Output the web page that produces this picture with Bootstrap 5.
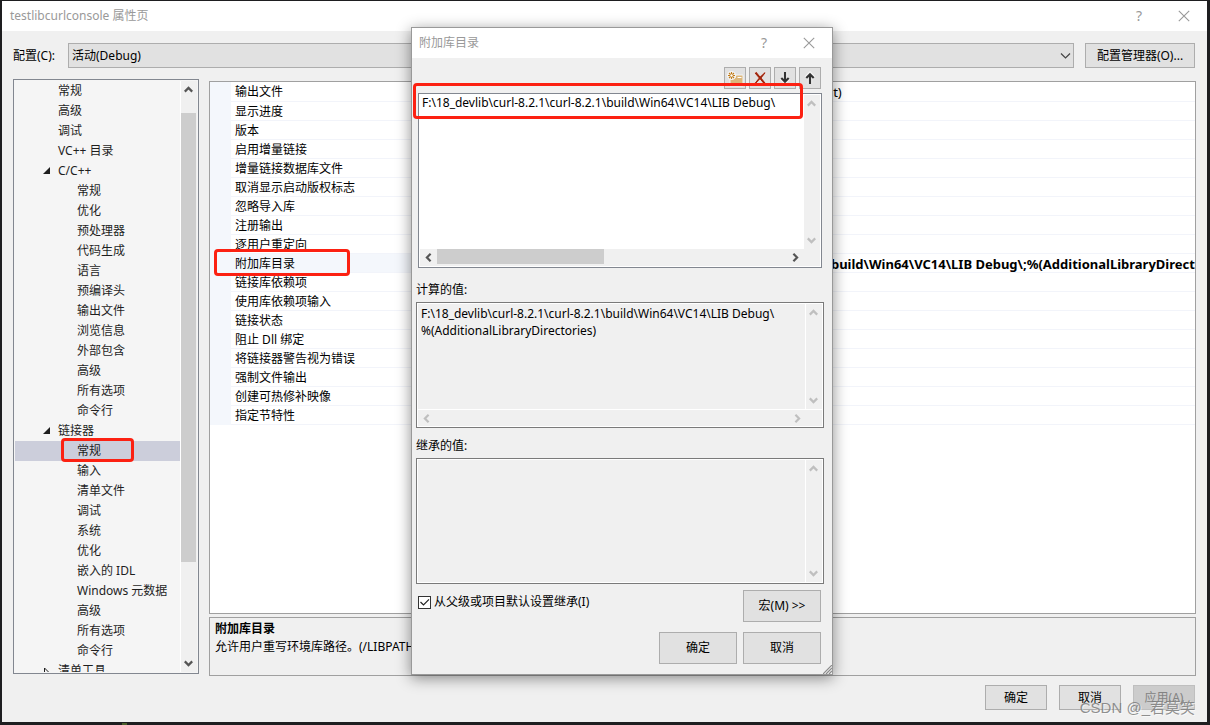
<!DOCTYPE html>
<html lang="zh-CN">
<head>
<meta charset="utf-8">
<meta name="viewport" content="width=device-width, initial-scale=1">
<title>testlibcurlconsole 属性页</title>
<link href="https://cdn.jsdelivr.net/npm/bootstrap@5.3.0/dist/css/bootstrap.min.css" rel="stylesheet">
<style>
  :root { --face: #f0f0f0; --btn: #e1e1e1; --edge: #adadad; --frame: #828790; --hot: #fc2112; }
  body { font: 12px/20px "Noto Sans", "Noto Sans CJK SC", sans-serif; color: #000; background: #1e1e20; }
  .desktop { min-height: 100vh; padding: 1px 3px 3px 2px; }
  .desktop::after { content: ""; position: absolute; left: 122px; bottom: 0; width: 5px; height: 2px; background: #4b5f2c; }
  .app-window { background: var(--face); }
  .titlebar { height: 30px; background: #fff; color: #999; padding: 0 17px 0 8px; gap: 33px; }
  .caption-btn { border: 0; background: none; padding: 0; width: 12px; height: 20px; color: #999; font-size: 14px; line-height: 20px; }
  .caption-btn svg, .tool-btn svg, .bar-btn svg { display: block; margin: auto; }
  .config-row { padding: 12px 12px 0 11px; gap: 8px; }
  .config-row label { width: 47px; }
  .win-select { height: 25px; border: 1px solid var(--edge); border-radius: 0; background: var(--btn); padding: 0 3px; font-size: 12px; color: #000; appearance: none; width: 100%; }
  .select-wrap svg { position: absolute; right: 3px; top: 9px; pointer-events: none; }
  .win-btn { border: 1px solid var(--edge); border-radius: 0; background: var(--btn); color: #000; padding: 0; font-size: 12px; line-height: 20px; height: 25px; width: 62px; }
  .win-btn.wide { width: 110px; margin-left: 3px; }
  .win-btn.tall { width: 78px; height: 32px; }
  .win-btn:disabled { background: #ccc; border-color: #bfbfbf; color: #838383; opacity: 1; }
  .work-row { padding: 13px 11px 0; gap: 10px; }
  .footer-row { padding: 9px 12px 0 0; gap: 12px; }

  .tree-pane { width: 186px; border: 1px solid var(--frame); background: #f5f5f5; padding: 1px; height: 595px; margin-top: -2px; }
  .tree-list { overflow: hidden; color: #1e1e1e; }
  .tree-list li { height: 20px; padding-left: 43px; white-space: nowrap; }
  .tree-list li.sub { padding-left: 62px; }
  .tree-list li.picked { background: #cccedb; }
  .tree-list svg { position: absolute; left: 28px; top: 6px; }
  .tree-list a { color: inherit; text-decoration: none; }
  .v-bar { width: 17px; background: var(--face); border-left: 1px solid #fff; }
  .v-bar .thumb { width: 15px; background: #cdcdcd; }
  .v-bar .track { padding-top: 15px; }
  .bar-btn { border: 0; background: none; padding: 0; width: 15px; height: 17px; flex: none; }
  .h-bar .bar-btn { width: 17px; }

  .work-main { min-width: 0; }
  .prop-pane { border: 1px solid #a0a0a0; background: #fff; height: 533px; overflow: hidden; }
  .prop-grid { table-layout: fixed; width: 100%; line-height: 16px; }
  .prop-grid th, .prop-grid td { height: 19px; padding: 2px 0 0; border-bottom: 1px solid #f2f4fa; white-space: nowrap; overflow: hidden; text-align: left; vertical-align: top; font-weight: 400; }
  .prop-grid .gutter { width: 21px; background: #f4f7fc; border-color: #f4f7fc; }
  .prop-grid .prop-name { width: 391px; padding-left: 4px; }
  .prop-grid .prop-value { font-size: 13px; }
  .prop-grid .current th, .prop-grid .current td { background: #f4f7fc; }
  .prop-grid .current .prop-value { font-weight: 700; background: #fff; }
  .help-pane { border: 1px solid #a0a0a0; height: 59px; margin-top: 3px; padding: 2px 5px; line-height: 18px; overflow: hidden; }

  .hot { position: absolute; border: 3px solid var(--hot); border-radius: 4px; pointer-events: none; z-index: 3; }
  .hot-tree { left: 46px; top: -3px; width: 73px; height: 24px; }
  .hot-prop { left: 5px; top: 168px; width: 136px; height: 27px; }
  .hot-path { left: -6px; top: -11px; width: 390px; height: 36px; }

  .dir-dialog { position: absolute; left: 411px; top: 27px; width: 422px; background: var(--face); border: 1px solid #999; box-shadow: 0 3px 14px rgba(0,0,0,.45); z-index: 2; }
  .dir-dialog .titlebar { padding-left: 7px; }
  .tool-row { padding: 9px 11px 0 0; gap: 3px; }
  .tool-btn { width: 22px; height: 22px; padding: 0; border: 1px solid var(--edge); background: var(--btn); }
  .path-list { height: 175px; border: 1px solid var(--frame); background: #fff; padding: 1px; margin: 4px 10px 0 6px; }
  .path-input { border: 0; padding: 0 2px; height: 16px; width: 100%; font-size: 12px; line-height: 16px; background: transparent; display: block; }
  .h-bar { height: 17px; background: var(--face); }
  .h-bar .thumb { width: 167px; height: 15px; background: #cdcdcd; }
  .value-group { padding: 0 8px 0 4px; }
  .value-box { height: 126px; border: 1px solid #7a7a7a; padding: 1px; outline: 1px solid #fff; outline-offset: -2px; }
  .value-box textarea { border: 0; background: transparent; resize: none; padding: 1px 3px; line-height: 17px; font-size: 12px; white-space: pre; overflow: hidden; color: #000; }
  .value-box .h-bar { border-top: 1px solid #fff; }
  .field-label { height: 24px; margin-top: 10px; padding-top: 2px; display: block; }
  .value-box + .field-label { margin-top: 6px; }
  .inherit-row { padding: 6px 11px 0 6px; }
  .inherit-check { height: 24px; gap: 3px; }
  .dialog-actions { padding: 10px 11px 10px 0; gap: 6px; }
  .tick { appearance: none; width: 13px; height: 13px; margin: 0; border: 1px solid #333; background: #fff; }
  .tick-wrap svg { position: absolute; left: 1px; top: 1px; pointer-events: none; }
  .grip { position: absolute; right: 0; bottom: 0; }
  .watermark { position: absolute; right: 15px; bottom: 7px; font: 15px/20px "Liberation Sans", "Noto Sans CJK SC", sans-serif; color: rgba(125,125,125,.85); text-shadow: 1px 1px 0 rgba(255,255,255,.6); pointer-events: none; }
</style>
</head>
<body>
<svg width="0" height="0" class="position-absolute" aria-hidden="true">
  <symbol id="up" viewBox="0 0 9 7"><path d="M.8 5.6 4.5 1.9l3.7 3.7" fill="none" stroke="currentColor" stroke-width="2.2"/></symbol>
  <symbol id="down" viewBox="0 0 9 7"><path d="M.8 1.4l3.7 3.7 3.7-3.7" fill="none" stroke="currentColor" stroke-width="2.2"/></symbol>
  <symbol id="left" viewBox="0 0 7 9"><path d="M5.6.8 1.9 4.5l3.7 3.7" fill="none" stroke="currentColor" stroke-width="2.2"/></symbol>
  <symbol id="right" viewBox="0 0 7 9"><path d="M1.4.8l3.7 3.7-3.7 3.7" fill="none" stroke="currentColor" stroke-width="2.2"/></symbol>
  <symbol id="close" viewBox="0 0 12 12"><path d="M.8.8l10.4 10.4M11.2.8.8 11.2" fill="none" stroke="currentColor" stroke-width="1.1"/></symbol>
</svg>

<div class="desktop position-relative d-flex">
  <main class="app-window flex-grow-1 d-flex flex-column">
    <header class="titlebar d-flex align-items-center">
      <span class="me-auto">testlibcurlconsole 属性页</span>
      <button class="caption-btn" type="button" aria-label="帮助">?</button>
      <button class="caption-btn" type="button" aria-label="关闭"><svg width="12" height="12"><use href="#close"/></svg></button>
    </header>

    <div class="config-row d-flex align-items-center">
      <label for="config" class="text-nowrap">配置(C):</label>
      <div class="select-wrap position-relative flex-grow-1">
        <select id="config" class="win-select"><option>活动(Debug)</option></select>
        <svg width="11" height="8" viewBox="0 0 11 8"><path d="M1 1.500l4.500 4.500 4.500-4.500" fill="none" stroke="#444" stroke-width="1.2"/></svg>
      </div>
      <button class="win-btn wide" type="button">配置管理器(O)...</button>
    </div>

    <div class="work-row d-flex">
      <nav class="tree-pane d-flex flex-shrink-0">
        <ul class="tree-list list-unstyled mb-0 flex-grow-1">
          <li><a href="#">常规</a></li>
          <li><a href="#">高级</a></li>
          <li><a href="#">调试</a></li>
          <li><a href="#">VC++ 目录</a></li>
          <li class="position-relative"><svg width="8" height="8"><path d="M7 0v7H0z" fill="#1e1e1e"/></svg><a href="#">C/C++</a></li>
          <li class="sub"><a href="#">常规</a></li>
          <li class="sub"><a href="#">优化</a></li>
          <li class="sub"><a href="#">预处理器</a></li>
          <li class="sub"><a href="#">代码生成</a></li>
          <li class="sub"><a href="#">语言</a></li>
          <li class="sub"><a href="#">预编译头</a></li>
          <li class="sub"><a href="#">输出文件</a></li>
          <li class="sub"><a href="#">浏览信息</a></li>
          <li class="sub"><a href="#">外部包含</a></li>
          <li class="sub"><a href="#">高级</a></li>
          <li class="sub"><a href="#">所有选项</a></li>
          <li class="sub"><a href="#">命令行</a></li>
          <li class="position-relative"><svg width="8" height="8"><path d="M7 0v7H0z" fill="#1e1e1e"/></svg><a href="#">链接器</a></li>
          <li class="sub picked position-relative"><a href="#">常规</a><span class="hot hot-tree"></span></li>
          <li class="sub"><a href="#">输入</a></li>
          <li class="sub"><a href="#">清单文件</a></li>
          <li class="sub"><a href="#">调试</a></li>
          <li class="sub"><a href="#">系统</a></li>
          <li class="sub"><a href="#">优化</a></li>
          <li class="sub"><a href="#">嵌入的 IDL</a></li>
          <li class="sub"><a href="#">Windows 元数据</a></li>
          <li class="sub"><a href="#">高级</a></li>
          <li class="sub"><a href="#">所有选项</a></li>
          <li class="sub"><a href="#">命令行</a></li>
          <li class="position-relative"><svg width="8" height="12"><path d="M1.500 1v9L6 5.500z" fill="none" stroke="#1e1e1e"/></svg><a href="#">清单工具</a></li>
        </ul>
        <div class="v-bar d-flex flex-column">
          <button class="bar-btn" type="button" aria-label="向上滚动"><svg width="9" height="7" color="#555"><use href="#up"/></svg></button>
          <div class="track flex-grow-1"><div class="thumb" style="height:449px"></div></div>
          <button class="bar-btn" type="button" aria-label="向下滚动"><svg width="9" height="7" color="#555"><use href="#down"/></svg></button>
        </div>
      </nav>

      <section class="work-main flex-grow-1 position-relative">
        <div class="prop-pane">
          <table class="prop-grid">
            <tbody>
              <tr><td class="gutter"></td><th scope="row" class="prop-name">输出文件</th><td class="prop-value">$(OutDir)$(TargetName)$(TargetExt)</td></tr>
              <tr><td class="gutter"></td><th scope="row" class="prop-name">显示进度</th><td></td></tr>
              <tr><td class="gutter"></td><th scope="row" class="prop-name">版本</th><td></td></tr>
              <tr><td class="gutter"></td><th scope="row" class="prop-name">启用增量链接</th><td></td></tr>
              <tr><td class="gutter"></td><th scope="row" class="prop-name">增量链接数据库文件</th><td></td></tr>
              <tr><td class="gutter"></td><th scope="row" class="prop-name">取消显示启动版权标志</th><td></td></tr>
              <tr><td class="gutter"></td><th scope="row" class="prop-name">忽略导入库</th><td></td></tr>
              <tr><td class="gutter"></td><th scope="row" class="prop-name">注册输出</th><td></td></tr>
              <tr><td class="gutter"></td><th scope="row" class="prop-name">逐用户重定向</th><td></td></tr>
              <tr class="current"><td class="gutter"></td><th scope="row" class="prop-name">附加库目录</th><td class="prop-value">F:\18_devlib\curl-8.2.1\curl-8.2.1\build\Win64\VC14\LIB Debug\;%(AdditionalLibraryDirectories)</td></tr>
              <tr><td class="gutter"></td><th scope="row" class="prop-name">链接库依赖项</th><td></td></tr>
              <tr><td class="gutter"></td><th scope="row" class="prop-name">使用库依赖项输入</th><td></td></tr>
              <tr><td class="gutter"></td><th scope="row" class="prop-name">链接状态</th><td></td></tr>
              <tr><td class="gutter"></td><th scope="row" class="prop-name">阻止 Dll 绑定</th><td></td></tr>
              <tr><td class="gutter"></td><th scope="row" class="prop-name">将链接器警告视为错误</th><td></td></tr>
              <tr><td class="gutter"></td><th scope="row" class="prop-name">强制文件输出</th><td></td></tr>
              <tr><td class="gutter"></td><th scope="row" class="prop-name">创建可热修补映像</th><td></td></tr>
              <tr><td class="gutter"></td><th scope="row" class="prop-name">指定节特性</th><td></td></tr>
            </tbody>
          </table>
        </div>
        <span class="hot hot-prop"></span>
        <div class="help-pane">
          <div class="fw-bold">附加库目录</div>
          <div>允许用户重写环境库路径。(/LIBPATH:folder)</div>
        </div>
      </section>
    </div>

    <footer class="footer-row d-flex justify-content-end">
      <button class="win-btn" type="button">确定</button>
      <button class="win-btn" type="button">取消</button>
      <button class="win-btn" type="button" disabled>应用(A)</button>
    </footer>
  </main>

  <div class="dir-dialog" role="dialog" aria-labelledby="dlg-title">
    <header class="titlebar d-flex align-items-center">
      <span class="me-auto" id="dlg-title">附加库目录</span>
      <button class="caption-btn" type="button" aria-label="帮助">?</button>
      <button class="caption-btn" type="button" aria-label="关闭"><svg width="12" height="12"><use href="#close"/></svg></button>
    </header>
    <div class="tool-row d-flex justify-content-end">
      <button class="tool-btn" type="button" aria-label="新行"><svg width="20" height="18" viewBox="0 0 20 18"><path d="M5 17V9h5l1-3h7v11z" fill="#dcb67a" stroke="#f3f3f3"/><path d="M12.500 8.500h4" stroke="#fff"/><circle cx="6.500" cy="6.500" r="4.600" fill="#f3f3f3"/><path d="M6.500 3v7M3 6.500h7M4 4l5 5M9 4l-5 5" stroke="#c27d1a" stroke-width="1.100"/><circle cx="6.500" cy="6.500" r="1.200" fill="#fff"/></svg></button>
      <button class="tool-btn" type="button" aria-label="删除"><svg width="18" height="18" viewBox="0 0 18 18"><path d="M3 4l2.500-1.500L9.200 7 13.500 3l1.800.6L11 9l4.200 5.200-2.400 1.300-3.900-4.700-4.300 4.700-1.800-.9L7.300 9z" fill="#a1260d" stroke="#f3f3f3" stroke-width=".8"/></svg></button>
      <button class="tool-btn" type="button" aria-label="下移"><svg width="16" height="16" viewBox="0 0 16 16"><path d="M8 2v9M4.300 8 8 11.900 11.700 8" fill="none" stroke="#f3f3f3" stroke-width="4.500"/><path d="M8 2v9M4.300 8 8 11.700 11.700 8" fill="none" stroke="#333" stroke-width="2.200"/></svg></button>
      <button class="tool-btn" type="button" aria-label="上移"><svg width="16" height="16" viewBox="0 0 16 16"><path d="M8 14V5M4.300 8 8 4.100 11.700 8" fill="none" stroke="#f3f3f3" stroke-width="4.500"/><path d="M8 14V5M4.300 8 8 4.300 11.700 8" fill="none" stroke="#333" stroke-width="2.200"/></svg></button>
    </div>

    <div class="path-list position-relative d-flex flex-column">
      <div class="d-flex flex-grow-1">
        <div class="flex-grow-1"><input class="path-input" type="text" aria-label="目录" value="F:\18_devlib\curl-8.2.1\curl-8.2.1\build\Win64\VC14\LIB Debug\"></div>
        <div class="v-bar d-flex flex-column justify-content-between">
          <button class="bar-btn" type="button" aria-label="向上滚动"><svg width="9" height="7" color="#bfbfbf"><use href="#up"/></svg></button>
          <button class="bar-btn" type="button" aria-label="向下滚动"><svg width="9" height="7" color="#bfbfbf"><use href="#down"/></svg></button>
        </div>
      </div>
      <div class="h-bar d-flex pe-3">
        <button class="bar-btn" type="button" aria-label="向左滚动"><svg width="7" height="9" color="#555"><use href="#left"/></svg></button>
        <div class="thumb me-auto"></div>
        <button class="bar-btn" type="button" aria-label="向右滚动"><svg width="7" height="9" color="#555"><use href="#right"/></svg></button>
      </div>
      <span class="hot hot-path"></span>
    </div>

    <div class="value-group">
      <label class="field-label" for="computed">计算的值:</label>
      <div class="value-box d-flex flex-column">
        <div class="d-flex flex-grow-1">
          <textarea class="flex-grow-1" id="computed" readonly>F:\18_devlib\curl-8.2.1\curl-8.2.1\build\Win64\VC14\LIB Debug\
%(AdditionalLibraryDirectories)</textarea>
          <div class="v-bar d-flex flex-column justify-content-between">
            <button class="bar-btn" type="button" aria-label="向上滚动"><svg width="9" height="7" color="#bfbfbf"><use href="#up"/></svg></button>
            <button class="bar-btn" type="button" aria-label="向下滚动"><svg width="9" height="7" color="#bfbfbf"><use href="#down"/></svg></button>
          </div>
        </div>
        <div class="h-bar d-flex pe-3 justify-content-between">
          <button class="bar-btn" type="button" aria-label="向左滚动"><svg width="7" height="9" color="#bfbfbf"><use href="#left"/></svg></button>
          <button class="bar-btn" type="button" aria-label="向右滚动"><svg width="7" height="9" color="#bfbfbf"><use href="#right"/></svg></button>
        </div>
      </div>
      <label class="field-label" for="inherited">继承的值:</label>
      <div class="value-box d-flex">
        <textarea class="flex-grow-1" id="inherited" readonly></textarea>
        <div class="v-bar d-flex flex-column justify-content-between">
          <button class="bar-btn" type="button" aria-label="向上滚动"><svg width="9" height="7" color="#bfbfbf"><use href="#up"/></svg></button>
          <button class="bar-btn" type="button" aria-label="向下滚动"><svg width="9" height="7" color="#bfbfbf"><use href="#down"/></svg></button>
        </div>
      </div>
    </div>

    <div class="inherit-row d-flex justify-content-between">
      <div class="inherit-check d-flex align-items-center">
        <span class="tick-wrap position-relative d-flex"><input class="tick" type="checkbox" id="inherit" checked><svg width="11" height="11" viewBox="0 0 11 11"><path d="M1.500 5l3 3L10 2.300" fill="none" stroke="#222" stroke-width="1.2"/></svg></span>
        <label for="inherit">从父级或项目默认设置继承(I)</label>
      </div>
      <button class="win-btn tall" type="button">宏(M) &gt;&gt;</button>
    </div>
    <div class="dialog-actions d-flex justify-content-end">
      <button class="win-btn tall" type="button">确定</button>
      <button class="win-btn tall" type="button">取消</button>
    </div>
    <svg class="grip" width="9" height="9" viewBox="0 0 9 9"><path d="M0 9 9 0M3 9l6-6M6 9l3-3" stroke="#8a8a8a" stroke-width="1.2"/></svg>
  </div>

  <div class="watermark">CSDN @_君莫笑</div>
</div>
<script src="https://cdn.jsdelivr.net/npm/bootstrap@5.3.0/dist/js/bootstrap.bundle.min.js"></script>
</body>
</html>
